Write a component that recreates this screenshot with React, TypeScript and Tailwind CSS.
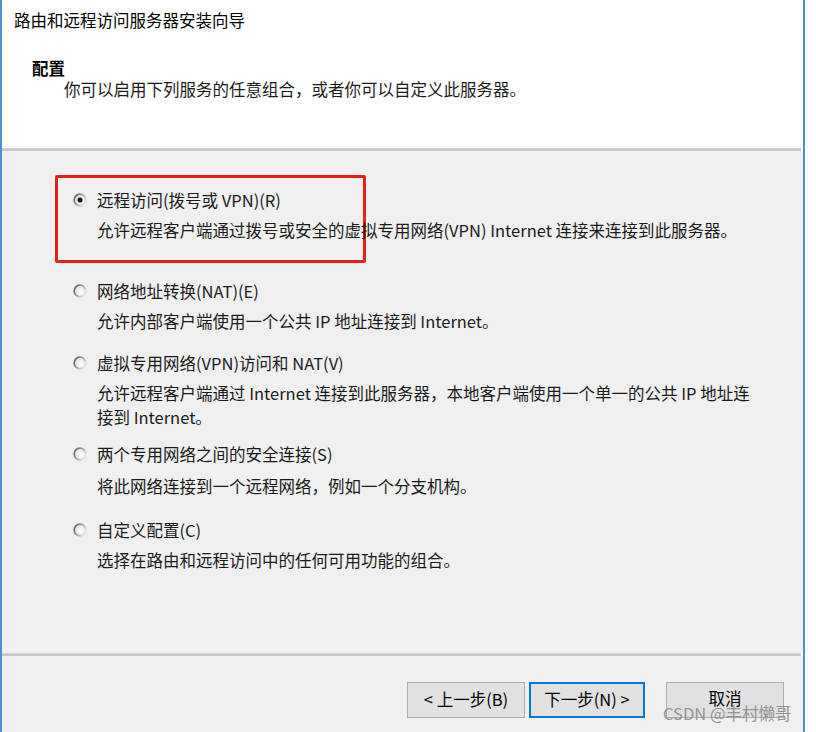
import React from "react";

const FONT = '"Noto Sans CJK SC", "Noto Sans", sans-serif';

function Radio({ checked }: { checked?: boolean }) {
  return (
    <svg width="14" height="14" viewBox="0 0 14 14" className="shrink-0">
      <defs>
        <linearGradient id="rg" x1="0" y1="0" x2="1" y2="0.6">
          <stop offset="0" stopColor="#4e4e4e" />
          <stop offset="0.5" stopColor="#999999" />
          <stop offset="1" stopColor="#e4e4e4" />
        </linearGradient>
        <radialGradient id="rf" cx="0.6" cy="0.6" r="0.6">
          <stop offset="0" stopColor="#ffffff" />
          <stop offset="1" stopColor="#e2e2e2" />
        </radialGradient>
      </defs>
      <circle cx="7" cy="7" r="5.8" fill="url(#rf)" stroke="url(#rg)" strokeWidth="1.7" />
      {checked && <circle cx="7" cy="7" r="2.5" fill="#111" />}
    </svg>
  );
}

function Option({
  label,
  desc,
  checked,
  descMt = "mt-[6px]",
}: {
  label: string;
  desc: React.ReactNode;
  checked?: boolean;
  descMt?: string;
}) {
  return (
    <div className="flex flex-col">
      <div className="flex items-center h-[24px]">
        <Radio checked={checked} />
        <span className="ml-[10px] whitespace-nowrap">{label}</span>
      </div>
      <div className={`${descMt} pl-[24px] whitespace-nowrap`}>{desc}</div>
    </div>
  );
}

export default function App() {
  return (
    <div
      className="w-[816px] h-[732px] bg-white flex text-[16.5px] leading-[24px] text-[#1a1a1a] relative overflow-hidden"
      style={{ fontFamily: FONT }}
    >
      <div className="w-[805px] h-full border-l-2 border-r-2 border-[#4a8fd8] flex flex-col">
        {/* Header */}
        <div className="h-[148px] bg-white flex flex-col pt-[8px]">
          <div className="pl-[12px] text-black">路由和远程访问服务器安装向导</div>
          <div className="pl-[30px] mt-[24px] font-bold text-black">配置</div>
          <div className="pl-[62px] -mt-[3px]">你可以启用下列服务的任意组合，或者你可以自定义此服务器。</div>
        </div>
        <div className="h-[3px] bg-[#c8c8c8] mr-[2px] border-t border-[#d6d6d6]" />

        {/* Body */}
        <div className="h-[502px] bg-[#f0f0f0] flex flex-col pl-[53px] pt-[24px]">
          <div className="w-[311px] border-[3px] border-[#e8201c] rounded-[2px] pt-[10px] pb-[18px] pl-[15px]">
            <Option
              checked
              label="远程访问(拨号或 VPN)(R)"
              desc="允许远程客户端通过拨号或安全的虚拟专用网络(VPN) Internet 连接来连接到此服务器。"
              descMt="mt-[6px]"
            />
          </div>
          <div className="pl-[18px] flex flex-col">
            <div className="mt-[16px]">
              <Option label="网络地址转换(NAT)(E)" desc="允许内部客户端使用一个公共 IP 地址连接到 Internet。" />
            </div>
            <div className="mt-[18px]">
              <Option
                label="虚拟专用网络(VPN)访问和 NAT(V)"
                desc={
                  <>
                    允许远程客户端通过 Internet 连接到此服务器，本地客户端使用一个单一的公共 IP 地址连
                    <br />
                    接到 Internet。
                  </>
                }
              />
            </div>
            <div className="mt-[13px]">
              <Option
                label="两个专用网络之间的安全连接(S)"
                desc="将此网络连接到一个远程网络，例如一个分支机构。"
                descMt="mt-[8px]"
              />
            </div>
            <div className="mt-[20px]">
              <Option label="自定义配置(C)" desc="选择在路由和远程访问中的任何可用功能的组合。" />
            </div>
          </div>
        </div>
        <div className="h-[3px] bg-[#c8c8c8] mr-[2px] border-t border-[#d6d6d6]" />

        {/* Footer */}
        <div className="flex-1 bg-[#f0f0f0] flex items-start justify-end pt-[26px] pr-[19px]">
          <button className="w-[118px] h-[36px] bg-[#e1e1e1] border border-[#adadad] text-black leading-[32px] pb-[2px]">
            &lt; 上一步(B)
          </button>
          <button className="ml-[4px] w-[116px] h-[36px] bg-[#e1e1e1] border-2 border-[#0078d7] text-black leading-[30px] pb-[2px]">
            下一步(N) &gt;
          </button>
          <button className="ml-[21px] w-[118px] h-[36px] bg-[#e1e1e1] border border-[#adadad] text-black leading-[30px] pb-[4px]">
            取消
          </button>
        </div>
      </div>
      <div className="absolute left-[663px] top-[701px] text-[16.5px] leading-[24px] text-[#8c8c8c] whitespace-nowrap opacity-90">
        CSDN @丰村懒哥
      </div>
    </div>
  );
}
